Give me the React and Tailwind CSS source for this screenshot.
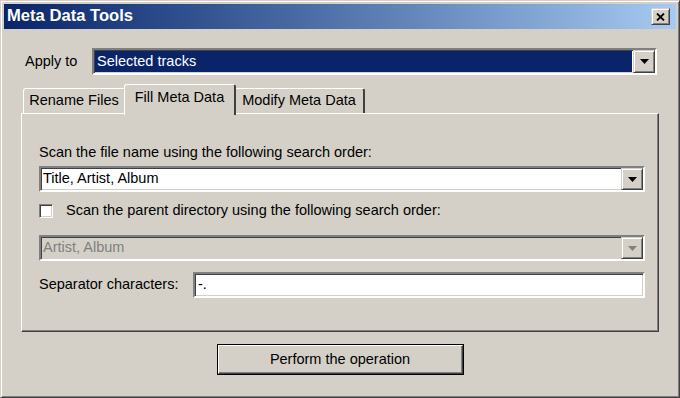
const font = { fontFamily: '"Liberation Sans", Arial, sans-serif' };

const Arrow = ({ disabled }) => (
  <svg width="9" height="5" viewBox="0 0 9 5">
    <path d="M0 0h9L4.5 5z" fill={disabled ? "#808080" : "#000"} />
  </svg>
);

const DropButton = ({ disabled }) => (
  <div className="w-[22px] h-full shrink-0 flex items-center justify-center bg-[#d4d0c8] border border-t-[#d4d0c8] border-l-[#d4d0c8] border-r-[#404040] border-b-[#404040] shadow-[inset_1px_1px_#ffffff,inset_-1px_-1px_#808080]">
    <Arrow disabled={disabled} />
  </div>
);

const Sunken = ({ className = "", children }) => (
  <div
    className={`border-2 border-t-[#808080] border-l-[#808080] border-r-white border-b-white shadow-[inset_1px_1px_#404040,inset_-1px_-1px_#d4d0c8] ${className}`}
  >
    {children}
  </div>
);

function Combo({ value, disabled }) {
  return (
    <Sunken
      className={`h-[26px] flex items-stretch ${disabled ? "bg-[#d4d0c8]" : "bg-white"}`}
    >
      <div
        className={`flex-1 flex items-center pl-[2px] ${disabled ? "text-[#808080]" : "text-black"}`}
      >
        {value}
      </div>
      <DropButton disabled={disabled} />
    </Sunken>
  );
}

function Tab({ label, active, width }) {
  return (
    <div
      className={`relative flex items-center justify-center bg-[#d4d0c8] border-t border-l border-white border-r-2 border-r-[#404040] rounded-t-[3px] text-black ${
        active
          ? "z-10 h-[31px] -mx-[2px] -mb-[2px] pb-[4px]"
          : "h-[25px]"
      }`}
      style={{ width }}
    >
      {label}
    </div>
  );
}

export default function App() {
  return (
    <div
      className="w-[680px] h-[398px] bg-[#d4d0c8] border border-t-[#d4d0c8] border-l-[#d4d0c8] border-r-[#404040] border-b-[#404040] shadow-[inset_1px_1px_#ffffff,inset_-1px_-1px_#808080] p-[3px] flex flex-col text-[14.5px]"
      style={font}
    >
      {/* title bar */}
      <div className="h-[25px] flex items-center justify-between bg-gradient-to-r from-[#0a246a] to-[#a6caf0] pl-[3px] pr-[6px]">
        <span className="text-white font-bold text-[16.6px]">Meta Data Tools</span>
        <div className="w-[19px] h-[17px] flex items-center justify-center bg-[#d4d0c8] border border-t-[#d4d0c8] border-l-[#d4d0c8] border-r-[#404040] border-b-[#404040] shadow-[inset_1px_1px_#ffffff,inset_-1px_-1px_#808080]">
          <svg width="9" height="8" viewBox="0 0 9 8">
            <path d="M1 0.5l7 7M8 0.5l-7 7" stroke="#000" strokeWidth="1.8" />
          </svg>
        </div>
      </div>

      {/* apply to */}
      <div className="flex items-center mt-[19px] pl-[21px] pr-[19px]">
        <span className="w-[67px] text-black">Apply to</span>
        <Sunken className="flex-1 h-[27px] flex items-stretch bg-white">
          <div className="flex-1 p-[1px]">
            <div className="h-full bg-[#0a246a] text-white flex items-center pl-[2px]">
              Selected tracks
            </div>
          </div>
          <DropButton />
        </Sunken>
      </div>

      {/* tabs */}
      <div className="mt-[10px] px-[17px]">
        <div className="flex items-end pl-[2px] h-[28px]">
          <Tab label="Rename Files" width={103} />
          <Tab label="Fill Meta Data" width={112} active />
          <Tab label="Modify Meta Data" width={131} />
        </div>
        <div className="h-[219px] border-t border-l border-white border-r border-b border-r-[#404040] border-b-[#404040] shadow-[inset_-1px_-1px_#808080] pl-[17px] pr-[13px] pt-[30px] text-black">
          <div className="leading-[16px]">Scan the file name using the following search order:</div>
          <div className="mt-[6px]">
            <Combo value="Title, Artist, Album" />
          </div>
          <div className="flex items-center mt-[12px] h-[14px]">
            <div className="w-[14px] h-[14px] bg-white border border-t-[#808080] border-l-[#808080] border-r-white border-b-white shadow-[inset_1px_1px_#404040,inset_-1px_-1px_#d4d0c8]" />
            <span className="ml-[13px]">Scan the parent directory using the following search order:</span>
          </div>
          <div className="mt-[17px]">
            <Combo value="Artist, Album" disabled />
          </div>
          <div className="flex items-center mt-[11px]">
            <span className="w-[154px]">Separator characters:</span>
            <Sunken className="flex-1 h-[26px] bg-white flex items-center pl-[3px]">-.</Sunken>
          </div>
        </div>
      </div>

      {/* button */}
      <div className="flex justify-center mt-[12px]">
        <div className="w-[247px] h-[31px] border border-black">
          <div className="w-full h-full flex items-center justify-center bg-[#d4d0c8] border border-t-white border-l-white border-r-[#404040] border-b-[#404040] shadow-[inset_-1px_-1px_#808080] text-black">
            Perform the operation
          </div>
        </div>
      </div>
    </div>
  );
}
